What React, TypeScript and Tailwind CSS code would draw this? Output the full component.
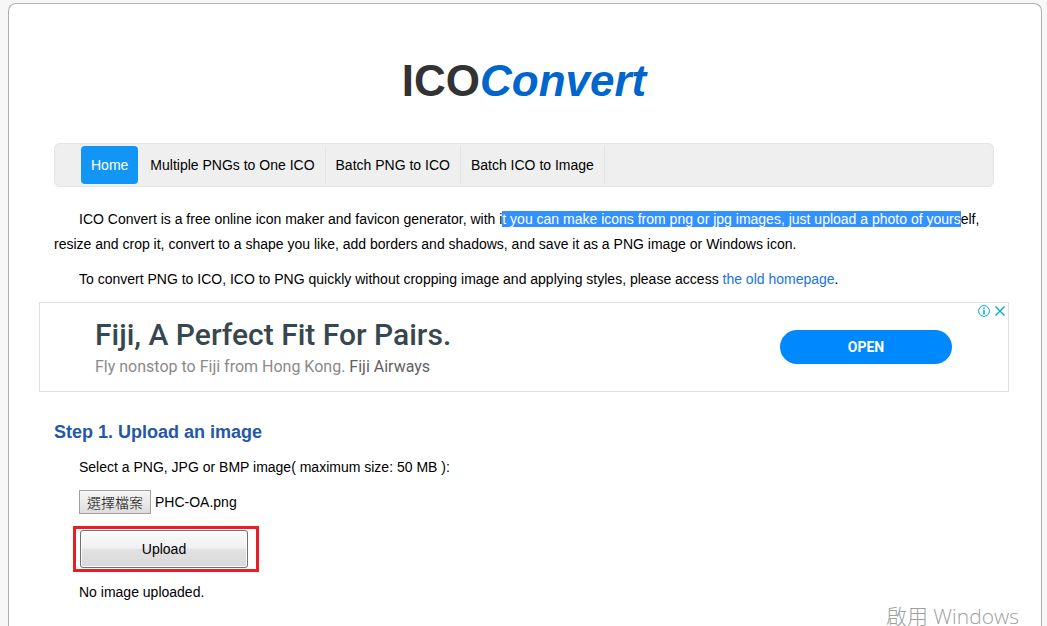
const navLinks = ["Multiple PNGs to One ICO", "Batch PNG to ICO", "Batch ICO to Image"];

function Logo() {
  return (
    <h1 className="text-center text-[44px] font-bold leading-[52px] text-[#333333]">
      ICO<span className="italic text-[#0066cc]">Convert</span>
    </h1>
  );
}

function Nav() {
  return (
    <nav className="mt-9 flex h-11 items-center rounded-md border border-[#e3e3e3] bg-[#efefef] px-[26px]">
      <a href="#home" className="mr-0.5 flex h-[38px] items-center rounded bg-[#1296f5] px-2.5 text-white">
        Home
      </a>
      {navLinks.map((label) => (
        <a key={label} href="#tool" className="flex h-[38px] items-center border-r border-[#e3e3e3] px-2.5">
          {label}
        </a>
      ))}
    </nav>
  );
}

function Ad() {
  return (
    <aside className="relative -mx-[15px] mt-2.5 flex h-[90px] items-center justify-between border border-[#e0e0e0] pl-[55px] pr-14 font-[Roboto,sans-serif]">
      <div className="pt-1">
        <div className="text-3xl font-medium leading-9 text-[#37474f]">Fiji, A Perfect Fit For Pairs.</div>
        <div className="text-base leading-7 text-[#8a8a8a]">
          Fly nonstop to Fiji from Hong Kong. <span className="text-[#616161]">Fiji Airways</span>
        </div>
      </div>
      <button type="button" className="h-[34px] w-[172px] rounded-full bg-[#0088ff] text-sm font-bold text-white">
        OPEN
      </button>
      <div className="absolute right-0.5 top-0.5 flex gap-1 text-[#00aecd]">
        <button type="button" aria-label="Ad information">
          <svg width="12" height="12" viewBox="0 0 12 12" fill="none" stroke="currentColor">
            <circle cx="6" cy="6" r="5.4" />
            <path d="M6 5V9.2" strokeWidth="1.5" />
            <path d="M6 2.6V4.1" strokeWidth="1.5" />
            <path d="M4.9 5.2H6M4.8 9H7.2" strokeWidth="0.6" />
          </svg>
        </button>
        <button type="button" aria-label="Close ad">
          <svg width="12" height="12" viewBox="0 0 12 12" fill="none" stroke="currentColor" strokeWidth="1.4">
            <path d="M1.5 1.5L10.5 10.5M10.5 1.5L1.5 10.5" />
          </svg>
        </button>
      </div>
    </aside>
  );
}

function UploadStep() {
  return (
    <section className="mt-7">
      <h2 className="text-lg font-bold leading-6 text-[#2458a8]">Step 1. Upload an image</h2>
      <div className="pl-[25px]">
        <p className="mt-[11px]">Select a PNG, JPG or BMP image( maximum size: 50 MB ):</p>
        <div className="relative mt-2.5 flex h-6 items-center gap-1">
          <input id="image-file" type="file" accept="image/*" className="peer sr-only" />
          <label
            htmlFor="image-file"
            className="flex h-6 items-center border border-[#a0a0a0] bg-linear-to-b from-[#f6f6f6] to-[#dddddd] px-[7px] font-['Noto_Sans_CJK_TC',sans-serif] font-light leading-5"
          >
            選擇檔案
          </label>
          <span className="leading-6">PHC-OA.png</span>
        </div>
        <div className="-ml-1.5 mt-3 w-[186px] border-3 border-[#ed1c24] py-px pl-1 pr-2">
          <button
            type="button"
            className="block h-[38px] w-full rounded-[3px] border border-[#707070] bg-[linear-gradient(to_bottom,#fafafa,#f0f0f0_48%,#e3e3e3_50%,#d8d8d8)] shadow-[inset_0_0_0_1px_#fafafa]"
          >
            Upload
          </button>
        </div>
        <p className="mt-2">No image uploaded.</p>
      </div>
    </section>
  );
}

export default function App() {
  return (
    <div className="relative flex min-h-screen flex-col bg-[#f7f7f7] pl-2 pr-[5px] pt-[3px] font-['Liberation_Sans','Noto_Sans_CJK_TC',sans-serif] text-sm leading-[25px] text-black">
      <main className="flex-1 rounded-t-lg border border-b-0 border-[#b0b0b0] bg-white pl-[45px] pr-[47px] pt-[51px]">
        <Logo />
        <Nav />
        <p className="mt-5 indent-[25px]">
          ICO Convert is a free online icon maker and favicon generator, with i
          <span className="bg-[#3390ff] text-white">
            t you can make icons from png or jpg images, just upload a photo of yours
          </span>
          elf, resize and crop it, convert to a shape you like, add borders and shadows, and save it as a PNG image or
          Windows icon.
        </p>
        <p className="mt-2.5 indent-[25px]">
          To convert PNG to ICO, ICO to PNG quickly without cropping image and applying styles, please access{" "}
          <a href="#old" className="text-[#1a73e8]">the old homepage</a>.
        </p>
        <Ad />
        <UploadStep />
      </main>
      <div className="pointer-events-none absolute bottom-0 right-7 whitespace-nowrap font-['Open_Sans','Noto_Sans_CJK_TC',sans-serif] text-[21px] font-light leading-5 text-[#a0a0a0]">
        啟用 Windows
      </div>
    </div>
  );
}
